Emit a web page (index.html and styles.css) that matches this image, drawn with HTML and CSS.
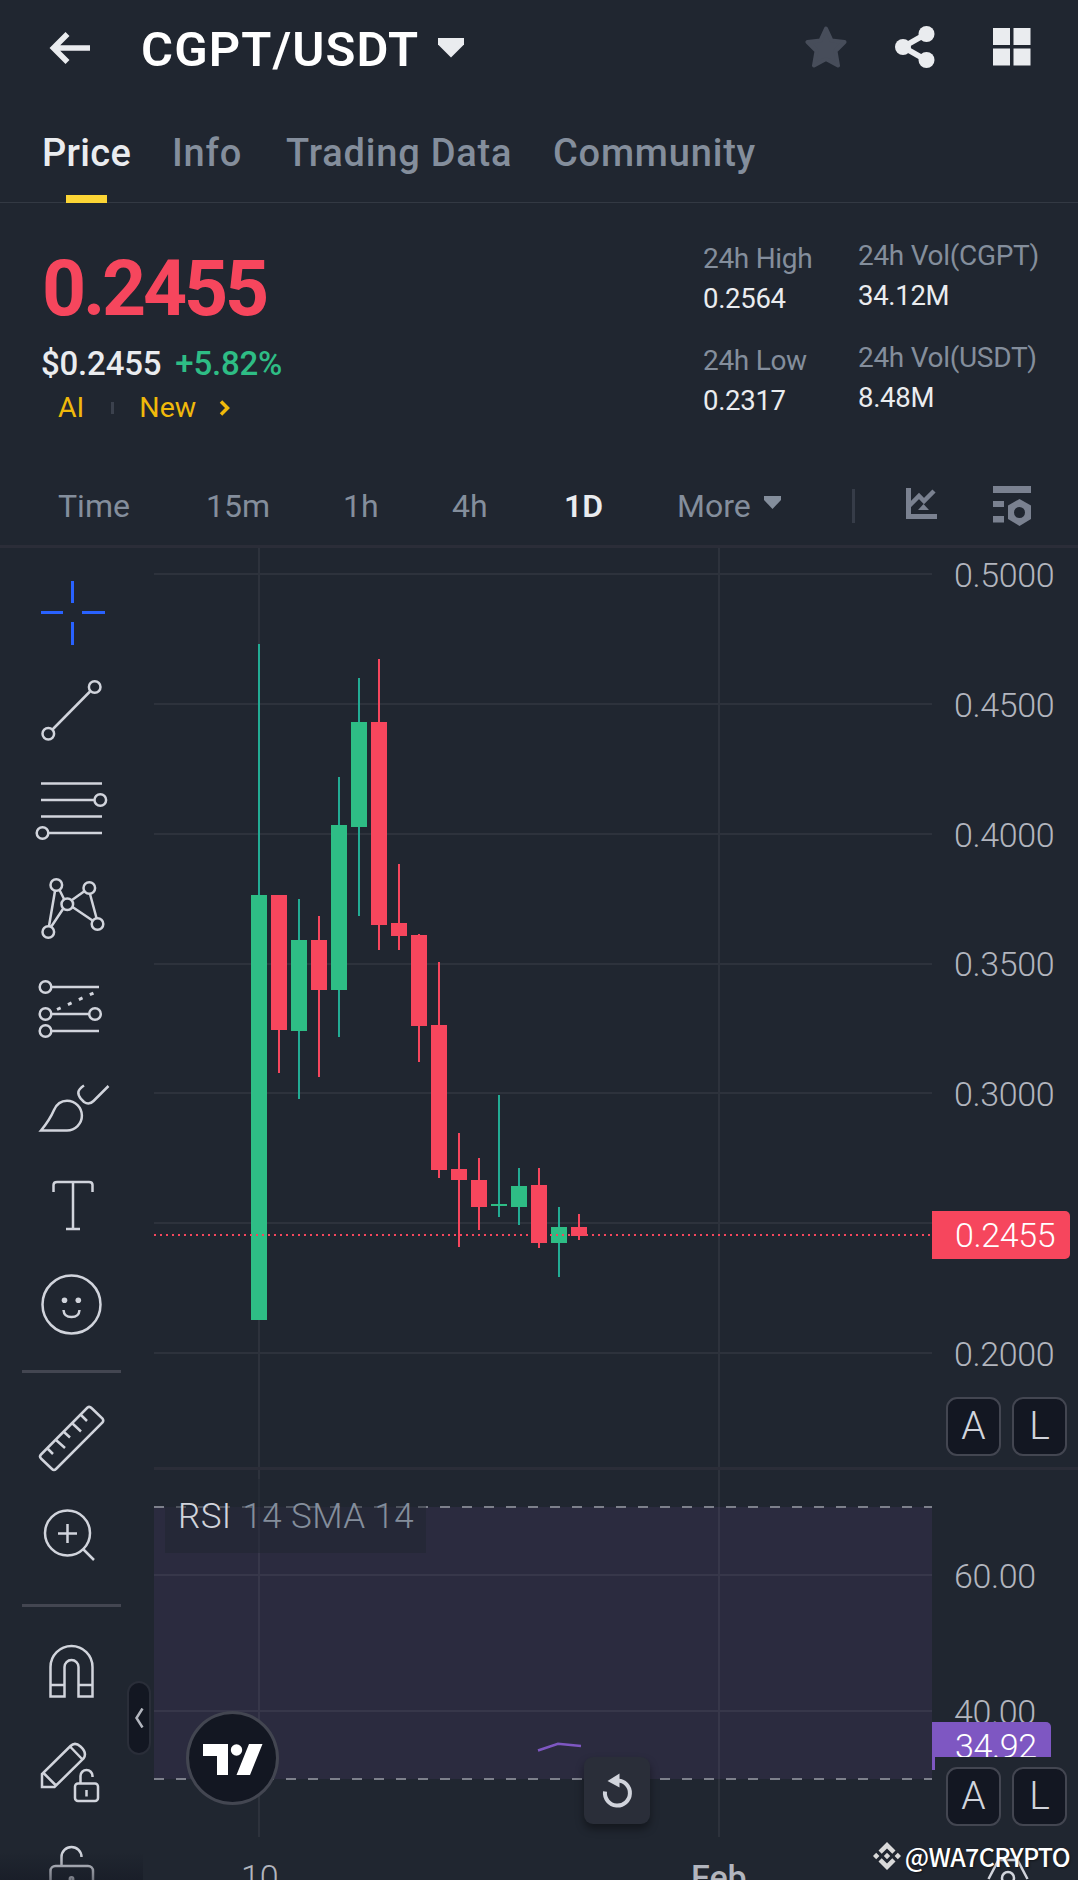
FILE: index.html
```html
<!DOCTYPE html>
<html lang="en">
<head>
    <meta charset="UTF-8">
    <meta name="viewport" content="width=device-width, initial-scale=1.0">
    <title>CGPT/USDT</title>
    <link rel="stylesheet" href="styles.css">
</head>
<body>
    <div class="header">
        <svg class="back" width="42" height="32" viewBox="0 0 42 32" fill="none" stroke="#eaecef" stroke-width="5.6"><path d="M41 16H5M18.500 2L4.500 16L18.500 30"/></svg>
        <div class="title">CGPT/USDT</div>
        <svg class="caret" width="26" height="20" viewBox="0 0 26 20" fill="#eaecef"><path d="M0 0H26V6.500L13 19.500L0 6.500Z"/></svg>
        <div class="header-icons">
            <svg width="42" height="42" viewBox="0 0 42 42" fill="#474d5a" stroke="#474d5a" stroke-width="4" stroke-linejoin="round"><path d="M21 2.500L26.500 14.500L39.500 16L30.500 25L33 39.500L21 33L9 39.500L11.500 25L2.500 16L15.500 14.500Z"/></svg>
            <svg class="share" width="40" height="42" viewBox="0 0 40 42" fill="#eaecef"><path d="M31 8L8 21L31 34" fill="none" stroke="#eaecef" stroke-width="5.500"/><circle cx="8" cy="21" r="8"/><circle cx="31.500" cy="8" r="8"/><circle cx="31.500" cy="34" r="8"/></svg>
            <svg width="38" height="38" viewBox="0 0 38 38" fill="#eaecef"><path d="M0 0H17V17H0ZM20.500 0H37.500V17H20.500ZM0 20.500H17V37.500H0ZM20.500 20.500H37.500V37.500H20.500Z"/></svg>
        </div>
    </div>
    <div class="tabs">
        <div class="tab active">Price</div>
        <div class="tab">Info</div>
        <div class="tab">Trading Data</div>
        <div class="tab">Community</div>
    </div>
    <div class="summary">
        <div class="quote">
            <div class="last-price">0.2455</div>
            <div class="fiat"><span>$0.2455</span><span class="change">+5.82%</span></div>
            <div class="tags">
                <span class="tag-ai">AI</span>
                <i></i>
                <span>New</span>
                <svg width="12" height="16" viewBox="0 0 12 16" fill="none" stroke="#f0b90b" stroke-width="3.500"><path d="M2 1.500L8.500 8L2 14.500"/></svg>
            </div>
        </div>
        <div class="stats">
            <div class="stat-label">24h High</div>
            <div class="stat-value">0.2564</div>
            <div class="stat-label low">24h Low</div>
            <div class="stat-value">0.2317</div>
        </div>
        <div class="stats volume">
            <div class="stat-label">24h Vol(CGPT)</div>
            <div class="stat-value">34.12M</div>
            <div class="stat-label low">24h Vol(USDT)</div>
            <div class="stat-value">8.48M</div>
        </div>
    </div>
    <div class="intervals">
        <span>Time</span>
        <span>15m</span>
        <span>1h</span>
        <span>4h</span>
        <span class="selected">1D</span>
        <span>More<svg class="more-caret" width="17" height="13" viewBox="0 0 17 13" fill="#848e9c"><path d="M0 0H17V4L8.500 13L0 4Z"/></svg></span>
        <i></i>
        <svg class="indicator" width="31" height="32" viewBox="0 0 31 32" fill="none" stroke="#7a8190" stroke-width="5"><path d="M2.500 0V28.500H31"/><path d="M3 18L13 8L18 13L28 3" stroke-width="4.500"/><path d="M17.500 16L23 22H12Z" fill="#7a8190" stroke="none"/></svg>
        <svg width="38" height="40" viewBox="0 0 38 40" fill="#7a8190"><path d="M0 0H38V7H0ZM0 15H11V21H0ZM0 30H11V36.500H0Z"/><path fill-rule="evenodd" d="M26.500 13L38 19.500V33L26.500 40L15 33V19.500ZM26.500 21A5.500 5.500 0 1 0 26.500 32A5.500 5.500 0 1 0 26.500 21Z"/></svg>
    </div>
    <div class="chart">
        <div class="toolbar">
            <svg class="tool cross" viewBox="0 563 154 99"><path d="M72.500 581V603M72.500 622V645M41 612.500H63M82 612.500H105"/></svg>
            <svg class="tool" viewBox="0 662 154 99"><path d="M52.500 729.500L90 691.500"/><circle cx="48.300" cy="733.700" r="5.800"/><circle cx="94.700" cy="687" r="5.800"/></svg>
            <svg class="tool" viewBox="0 761 154 99"><path d="M41 783.500H102M41 800H94M41 816.500H102M48 833H102"/><circle cx="100.300" cy="800" r="5.800"/><circle cx="42.500" cy="833" r="5.800"/></svg>
            <svg class="tool" viewBox="0 860 154 99"><path d="M55 891L49 926M59.500 890L64 899M63 909L51 927M72 900L84 891.500M72.500 907L92.500 920.500M90 894L96.500 918"/><circle cx="56.300" cy="885" r="5.800"/><circle cx="89.300" cy="888" r="5.800"/><circle cx="67.300" cy="904.300" r="5.800"/><circle cx="48.300" cy="932" r="5.800"/><circle cx="97.500" cy="924" r="5.800"/></svg>
            <svg class="tool" viewBox="0 959 154 99"><path d="M51 987H99M51 1014H89M51 1031H99"/><path d="M57 1009.500L98 991" stroke-dasharray="4 8" stroke-width="3"/><circle cx="45.500" cy="987" r="5.800"/><circle cx="45.500" cy="1014" r="5.800"/><circle cx="95" cy="1014" r="5.800"/><circle cx="45.500" cy="1031" r="5.800"/></svg>
            <svg class="tool" viewBox="0 1058 154 99"><path d="M41 1130.500C48 1122 51 1117 54 1110C57 1103 62 1100.700 67 1100.700A14.500 14.500 0 0 1 67 1130.500ZM84 1085.500C77 1090 77 1094 81 1099L84 1102Q89 1105.500 93.500 1101L108.500 1086"/></svg>
            <svg class="tool" viewBox="0 1157 154 99"><path d="M53.500 1192V1185Q53.500 1182 57 1182H89Q92.500 1182 92.500 1185V1192M73 1182V1229M66 1229H80"/></svg>
            <svg class="tool" viewBox="0 1256 154 99"><circle cx="71.500" cy="1304.500" r="29"/><path d="M63.500 1310Q64 1317 71.500 1317T79.500 1310"/><g fill="#d1d4dc" stroke="none"><circle cx="64.500" cy="1300.300" r="2.800"/><circle cx="78.300" cy="1300.300" r="2.800"/></g></svg>
            <div class="tool-divider"></div>
            <svg class="tool" viewBox="0 1389 154 99"><path d="M87.500 1407.500Q89.500 1406 91.500 1408L102.500 1418.500Q104 1420.500 102.500 1422.500L56 1469Q54 1471 52 1469L41 1458.500Q39 1456.500 41 1454.500ZM47.500 1448.500L53 1454M56 1440L65 1448M64 1432L70 1437.500M72.500 1423.500L81 1431.500M81 1415L87 1421"/></svg>
            <svg class="tool" viewBox="0 1488 154 99"><circle cx="67.500" cy="1533" r="22.500"/><path d="M83 1549L94 1560M58 1533.500H77M67.500 1524V1543"/></svg>
            <div class="tool-divider"></div>
            <svg class="tool" viewBox="0 1622 154 99"><path d="M50.500 1696.500V1667A21 21 0 0 1 92.500 1667V1696.500H78.500V1667A7 7 0 0 0 64.500 1667V1696.500ZM50.500 1685H64.500M78.500 1685H92.500"/></svg>
            <svg class="tool" viewBox="0 1721 154 99"><path d="M42 1787V1774L70.500 1746Q75 1741.500 80.500 1746.500Q87.500 1753 83.500 1758.500L54.500 1787ZM43.500 1773L56 1785.500M70.500 1747L83 1760"/><rect x="75" y="1783.500" width="23" height="17.500" rx="3"/><path d="M80.500 1783V1776A6 6 0 0 1 92.500 1776V1777M86.500 1790V1796.500"/></svg>
            <svg class="tool last" viewBox="0 1820 154 60"><rect x="50.500" y="1866" width="42.500" height="34" rx="5"/><path d="M61.500 1866V1857A10 10 0 0 1 81.500 1857"/><circle cx="71.500" cy="1879" r="1.700"/></svg>
            <div class="toolbar-fade"></div>
            <div class="collapse"><svg width="9" height="20" viewBox="0 0 9 20" fill="none" stroke="#b2b5be" stroke-width="2.500"><path d="M7.500 .5L1.500 10L7.500 19.500"/></svg></div>
        </div>
        <div class="plot">
            <svg width="778" height="1332" viewBox="154 548 778 1332" shape-rendering="crispEdges">
                <rect x="154" y="1507" width="778" height="272" fill="#2b2b3f"/>
                <path d="M154 574H932M154 704H932M154 834H932M154 964H932M154 1093H932M154 1223H932M154 1353H932M154 1575H932M154 1711H932M259 548V1837M719 548V1837" stroke="#ffffff" stroke-opacity=".06" stroke-width="2"/>
                <path d="M154 1507H932M154 1779H932" stroke="#7d808b" stroke-width="2" stroke-dasharray="10 12"/>
                <g id="candles"></g>
                <path d="M154 1235H932" stroke="#f6465d" stroke-width="2" stroke-dasharray="2 4"/>
                <path d="M538 1750.500L558 1743.700L581 1746" fill="none" stroke="#7e57c2" stroke-width="2.500" shape-rendering="auto"/>
            </svg>
            <div class="rsi-legend"><span>RSI</span>14 SMA 14</div>
            <div class="tv-logo"><svg width="60" height="32" viewBox="0 0 60 32" fill="#fff"><path d="M0 0H25V31H14V12H0ZM46 0H59.500L47 31H33.500Z"/><circle cx="33.500" cy="6" r="5.700"/></svg></div>
            <div class="reset"><svg width="32" height="36" viewBox="0 0 32 36" fill="none" stroke="#d1d4dc" stroke-width="4"><path d="M4 18.500A12.500 12.500 0 1 0 16.500 7.500"/><path d="M6.500 8L18.500 .5V14.500Z" fill="#d1d4dc" stroke="none"/></svg></div>
            <div class="date first">10</div>
            <div class="date month">Feb</div>
        </div>
        <div class="axis">
            <div class="axis-label">0.5000</div>
            <div class="axis-label">0.4500</div>
            <div class="axis-label">0.4000</div>
            <div class="axis-label">0.3500</div>
            <div class="axis-label">0.3000</div>
            <div class="axis-label"></div>
            <div class="axis-label">0.2000</div>
            <div class="scale-buttons"><span>A</span><span>L</span></div>
            <div class="axis-label rsi-60">60.00</div>
            <div class="axis-label rsi-40">40.00</div>
            <div class="scale-buttons lower"><span>A</span><span>L</span></div>
            <div class="price-tag">0.2455</div>
            <div class="rsi-tag">34.92</div>
            <div class="rsi-tag-edge"></div>
            <svg class="gear" width="42" height="22" viewBox="0 0 42 22" fill="none" stroke="#d1d4dc" stroke-width="2.500"><path d="M1.500 21L11.500 2H30.500L40.500 21"/><circle cx="21" cy="20" r="6"/></svg>
        </div>
        <div class="pane-border"></div>
        <div class="watermark">
            <svg width="28" height="28" viewBox="0 0 28 28" fill="#d9d9d9"><path d="M14 0L22.500 8.500L19.300 11.700L14 6.400L8.700 11.700L5.500 8.500ZM14 28L22.500 19.500L19.300 16.300L14 21.600L8.700 16.300L5.500 19.500ZM14 10.800L17.200 14L14 17.200L10.800 14ZM3.200 10.800L6.400 14L3.200 17.200L0 14ZM24.800 10.800L28 14L24.800 17.200L21.600 14Z"/></svg>
            @WA7CRYPTO
        </div>
    </div>
    <script src="chart.js"></script>
</body>
</html>
```
FILE: chart.js
```js
// direction, wick top, wick bottom, body top, body bottom
const candles = [
    ['up', 644, 1320, 895, 1320],
    ['down', 895, 1073, 895, 1030],
    ['up', 899, 1099, 940, 1031],
    ['down', 916, 1077, 940, 990],
    ['up', 777, 1037, 825, 990],
    ['up', 678, 916, 722, 827],
    ['down', 659, 950, 722, 925],
    ['down', 864, 950, 923, 936],
    ['down', 934, 1062, 935, 1026],
    ['down', 962, 1178, 1025, 1170],
    ['down', 1133, 1247, 1169, 1180],
    ['down', 1158, 1230, 1180, 1207],
    ['up', 1095, 1217, 1204, 1206],
    ['up', 1168, 1225, 1186, 1207],
    ['down', 1168, 1248, 1185, 1243],
    ['up', 1207, 1277, 1227, 1243],
    ['down', 1214, 1240, 1227, 1236]
];
const group = document.getElementById('candles');

function addRect(cls, x, y, width, height) {
    const rect = document.createElementNS('http://www.w3.org/2000/svg', 'rect');
    rect.setAttribute('class', cls);
    rect.setAttribute('x', x);
    rect.setAttribute('y', y);
    rect.setAttribute('width', width);
    rect.setAttribute('height', height);
    group.appendChild(rect);
}

candles.forEach(([dir, high, low, top, bottom], i) => {
    const x = 259 + i * 20;
    addRect('wick-' + dir, x - 1, high, 2, low - high);
    addRect('body-' + dir, x - 8, top, 16, bottom - top);
});
```
FILE: styles.css
```css
:root {
    --bg: #202630;
    --text: #eaecef;
    --muted: #848e9c;
    --line: #2b2d38;
    --red: #f6465d;
    --green: #2ebd85;
    --yellow: #f0b90b;
}
* {
    box-sizing: border-box;
}
body {
    margin: 0;
    width: 1078px;
    height: 1880px;
    overflow: hidden;
    background: var(--bg);
    color: var(--text);
    font-family: Roboto, "Liberation Sans", sans-serif;
}
svg {
    display: block;
    flex: none;
}
.header {
    display: flex;
    align-items: center;
    height: 98px;
    padding: 0 47px 0 49px;
}
.back {
    margin-top: -3px;
}
.title {
    width: 295px;
    margin-left: 50px;
    padding-top: 2px;
    color: #fff;
    font-size: 49px;
    font-weight: 600;
    line-height: 98px;
    letter-spacing: 1.1px;
    white-space: nowrap;
}
.caret {
    margin-left: 2px;
    margin-top: -3px;
}
.header-icons {
    display: flex;
    align-items: center;
    margin: -4px 0 0 auto;
}
.share {
    margin: 0 58px 0 48px;
}
.tabs {
    display: grid;
    grid-template-columns: 130px 114px 267px auto;
    height: 105px;
    padding: 5px 0 0 42px;
    border-bottom: 1px solid #333943;
    color: var(--muted);
    font-size: 38px;
    font-weight: 500;
    line-height: 101px;
    letter-spacing: 0.8px;
    white-space: nowrap;
}
.tab.active {
    position: relative;
    color: var(--text);
    letter-spacing: 0.3px;
}
.tab.active::after {
    content: "";
    position: absolute;
    left: 24px;
    bottom: 1px;
    width: 41px;
    height: 8px;
    background: #fcd535;
}
.summary {
    display: flex;
    height: 263px;
    padding-top: 36px;
}
.quote {
    width: 703px;
    padding: 8px 0 0 42px;
}
.last-price {
    color: var(--red);
    font-size: 77px;
    font-weight: 700;
    line-height: 85px;
    letter-spacing: -3.2px;
}
.fiat {
    display: flex;
    margin: 9px 0 0 -1px;
    font-size: 33px;
    font-weight: 500;
    line-height: 46px;
    letter-spacing: -0.2px;
}
.change {
    margin-left: 14px;
    color: var(--green);
}
.tags {
    display: flex;
    align-items: center;
    margin-top: 3px;
    padding-left: 16px;
    color: var(--yellow);
    font-size: 28.500px;
    line-height: 36px;
}
.tags i {
    width: 3px;
    height: 12px;
    margin: 0 25px 0 27px;
    background: #3b414d;
}
.tags svg {
    margin-left: 23px;
}
.stats {
    width: 155px;
    font-size: 28px;
    line-height: 40px;
    white-space: nowrap;
}
.volume {
    margin-top: -3px;
}
.stat-label {
    color: var(--muted);
    letter-spacing: -0.3px;
}
.stat-label.low {
    margin-top: 22px;
}
.stat-value {
    font-size: 27.5px;
    letter-spacing: -0.3px;
}
.intervals {
    display: grid;
    grid-template-columns: 148px 137px 109px 112px 113px 175px 54px 87px auto;
    align-items: center;
    height: 82px;
    padding-left: 58px;
    border-bottom: 3px solid var(--line);
    color: var(--muted);
    font-size: 32px;
}
.intervals .selected {
    color: var(--text);
    font-weight: 600;
}
.intervals i {
    width: 3px;
    height: 34px;
    background: #363c48;
}
.more-caret {
    display: inline-block;
    margin: 0 0 8px 13px;
}
.indicator {
    margin-top: -3px;
}
.chart {
    position: relative;
    display: grid;
    grid-template-columns: 154px 778px 146px;
    height: 1332px;
}
.toolbar {
    position: relative;
    padding-top: 15px;
}
.tool {
    width: 154px;
    height: 99px;
    fill: none;
    stroke: #d1d4dc;
    stroke-width: 2.5;
}
.tool.cross {
    stroke: #2962ff;
    stroke-width: 3;
}
.tool.last {
    height: 60px;
}
.tool-divider {
    width: 99px;
    height: 3px;
    margin: 15px 0 16px 22px;
    background: #434651;
}
.tool-divider ~ .tool-divider {
    margin: 17px 0 15px 22px;
}
.toolbar-fade {
    position: absolute;
    left: 0;
    bottom: 0;
    width: 143px;
    height: 28px;
    background: linear-gradient(rgba(19, 23, 34, 0), rgba(19, 23, 34, .5));
}
.collapse {
    position: absolute;
    left: 127px;
    top: 1133px;
    display: flex;
    align-items: center;
    justify-content: center;
    width: 24px;
    height: 74px;
    border: 2px solid #2a2e39;
    border-radius: 12px;
    background: #131722;
}
.plot {
    position: relative;
    height: 1332px;
    overflow: hidden;
}
.wick-up {
    fill: #22ab94;
}
.body-up {
    fill: var(--green);
}
.wick-down, .body-down {
    fill: var(--red);
}
.rsi-legend {
    position: absolute;
    left: 11px;
    top: 931px;
    width: 261px;
    height: 74px;
    padding-left: 13px;
    background: rgba(32, 38, 48, .5);
    color: var(--muted);
    font-size: 35px;
    font-weight: 300;
    line-height: 75px;
    letter-spacing: 0.4px;
    white-space: nowrap;
}
.rsi-legend span {
    margin-right: 11px;
    color: #d1d4dc;
}
.tv-logo {
    position: absolute;
    left: 32px;
    top: 1163px;
    display: flex;
    align-items: center;
    justify-content: center;
    width: 93px;
    height: 94px;
    padding-top: 3px;
    border: 3px solid #434651;
    border-radius: 50%;
    background: #131722;
}
.reset {
    position: absolute;
    left: 430px;
    top: 1209px;
    display: flex;
    align-items: center;
    justify-content: center;
    width: 66px;
    height: 67px;
    border-radius: 9px;
    background: #2a2e39;
    box-shadow: 0 5px 9px rgba(0, 0, 0, .4);
}
.date {
    position: absolute;
    top: 1309px;
    left: 87px;
    color: #b2b5be;
    font-size: 34px;
    font-weight: 300;
    line-height: 40px;
}
.date.month {
    left: 537px;
    font-weight: 500;
}
.axis {
    position: relative;
    height: 1332px;
    padding-top: 6px;
    overflow: hidden;
}
.axis-label {
    height: 40px;
    margin-bottom: 89.8px;
    padding-left: 22px;
    color: #b2b5be;
    font-size: 34px;
    font-weight: 300;
    line-height: 43px;
    letter-spacing: -0.35px;
}
.scale-buttons {
    display: flex;
    gap: 11px;
    margin: -66px 0 99px 14px;
}
.scale-buttons span {
    width: 55px;
    height: 59px;
    border: 2px solid #434651;
    border-radius: 11px;
    background: #131722;
    color: #d1d4dc;
    font-size: 39px;
    font-weight: 300;
    line-height: 54px;
    text-align: center;
}
.rsi-60 {
    margin-bottom: 96px;
}
.rsi-40 {
    margin-bottom: 102px;
}
.price-tag, .rsi-tag {
    position: absolute;
    left: 0;
    top: 663px;
    width: 138px;
    height: 48px;
    padding-left: 23px;
    border-radius: 0 5px 5px 0;
    background: var(--red);
    color: #fff;
    font-size: 34px;
    font-weight: 300;
    line-height: 49px;
    letter-spacing: -0.35px;
}
.rsi-tag {
    top: 1174px;
    width: 119px;
    height: 35px;
    overflow: hidden;
    border-radius: 0 5px 0 0;
    background: #7e57c2;
}
.rsi-tag-edge {
    position: absolute;
    left: 0;
    top: 1209px;
    width: 3px;
    height: 13px;
    background: #7e57c2;
}
.gear {
    position: absolute;
    left: 55px;
    bottom: 0;
}
.pane-border {
    position: absolute;
    left: 154px;
    right: 0;
    top: 919px;
    height: 3px;
    background: var(--line);
}
.watermark {
    position: absolute;
    right: 8px;
    bottom: 6px;
    display: flex;
    align-items: center;
    gap: 4px;
    color: #fff;
    font-family: "Noto Sans CJK SC", sans-serif;
    font-size: 25px;
    font-weight: 500;
    line-height: 36px;
    letter-spacing: -0.65px;
    text-shadow: 1px 1px 2px rgba(0, 0, 0, .5);
}
```
